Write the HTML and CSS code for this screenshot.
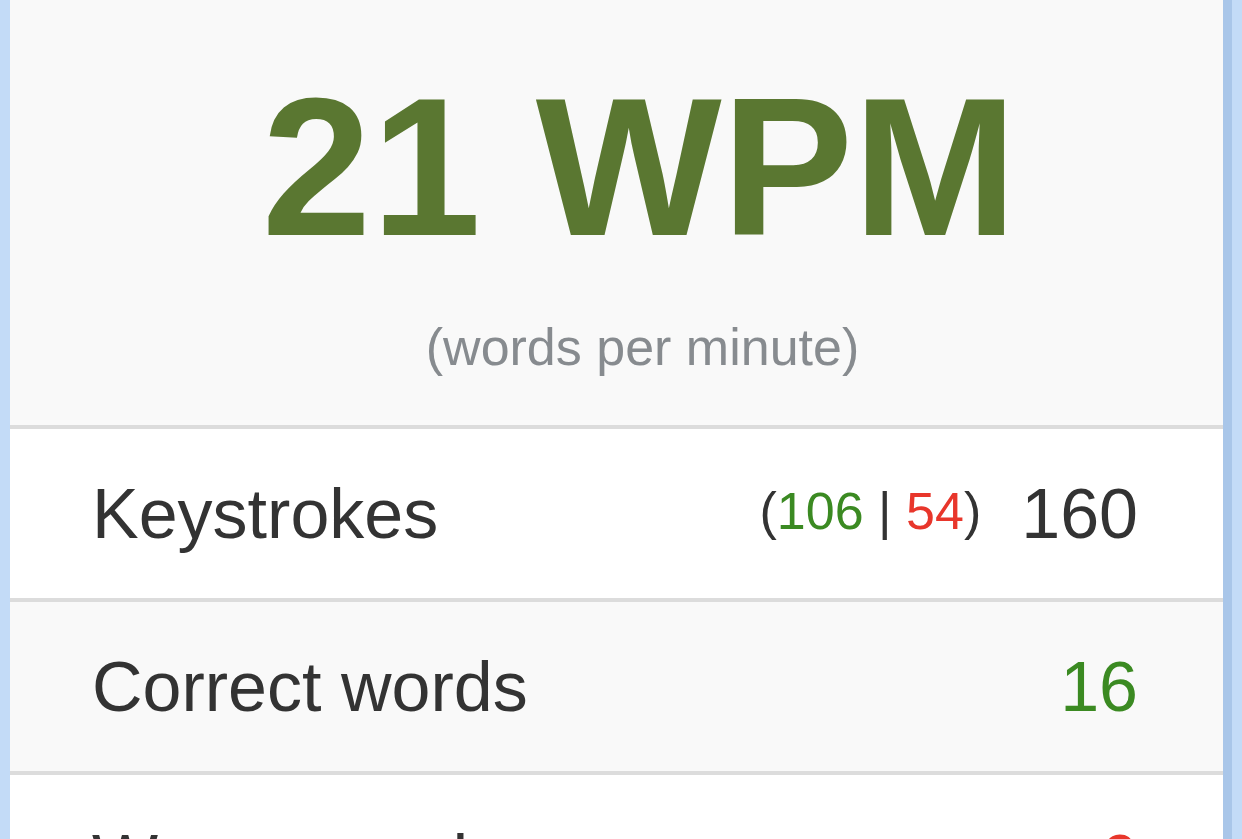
FILE: index.html
```html
<!DOCTYPE html>
<html lang="en">
<head>
<meta charset="utf-8">
<title>Typing result</title>
<link rel="stylesheet" href="styles.css">
</head>
<body>
<div class="frame">
  <div class="panel">
    <div class="summary">
      <div class="wpm">21 WPM</div>
      <div class="wpm-label">(words per minute)</div>
    </div>
    <div class="row row-light">
      <div class="label">Keystrokes</div>
      <div class="value-group">
        <span class="breakdown">(<span class="good">106</span> | <span class="bad">54</span>)</span>
        <span class="value">160</span>
      </div>
    </div>
    <div class="row row-gray">
      <div class="label">Correct words</div>
      <div class="value-group">
        <span class="value good">16</span>
      </div>
    </div>
    <div class="row row-light">
      <div class="label">Wrong words</div>
      <div class="value-group">
        <span class="value bad">6</span>
      </div>
    </div>
  </div>
</div>
</body>
</html>
```

FILE: styles.css
```css
html, body {
  margin: 0;
  padding: 0;
  height: 100%;
  overflow: hidden;
}

body {
  background: #c3dbf7;
  font-family: "Liberation Sans", Arial, Helvetica, sans-serif;
  color: #333333;
}

.frame {
  display: flex;
  padding: 0 10px;
  height: 100%;
}

.panel {
  flex: 1;
  background: #f9f9f9;
  border-right: 9px solid #a9c6e9;
  display: flex;
  flex-direction: column;
  overflow: hidden;
}

.summary {
  padding: 69px 0 52px 46px;
  text-align: center;
  border-bottom: 4px solid #dcdcdc;
  background: #f9f9f9;
}

.wpm {
  font-size: 197px;
  line-height: 197px;
  font-weight: bold;
  color: #5a7731;
}

.wpm-label {
  margin-top: 55px;
  padding-left: 6px;
  font-size: 52px;
  line-height: 52px;
  color: #878b8f;
}

.row {
  height: 169px;
  flex: 0 0 169px;
  display: flex;
  align-items: center;
  justify-content: space-between;
  padding: 0 85px 0 82px;
  border-bottom: 4px solid #dcdcdc;
  font-size: 70px;
  line-height: 70px;
}

.row-light {
  background: #ffffff;
}

.row-gray {
  background: #f9f9f9;
}

.value-group {
  display: flex;
  align-items: center;
  gap: 40px;
}

.breakdown {
  font-size: 52px;
  line-height: 52px;
  padding-bottom: 5px;
  color: #333333;
}

.good {
  color: #3b8a22;
}

.bad {
  color: #e8362b;
}
```
